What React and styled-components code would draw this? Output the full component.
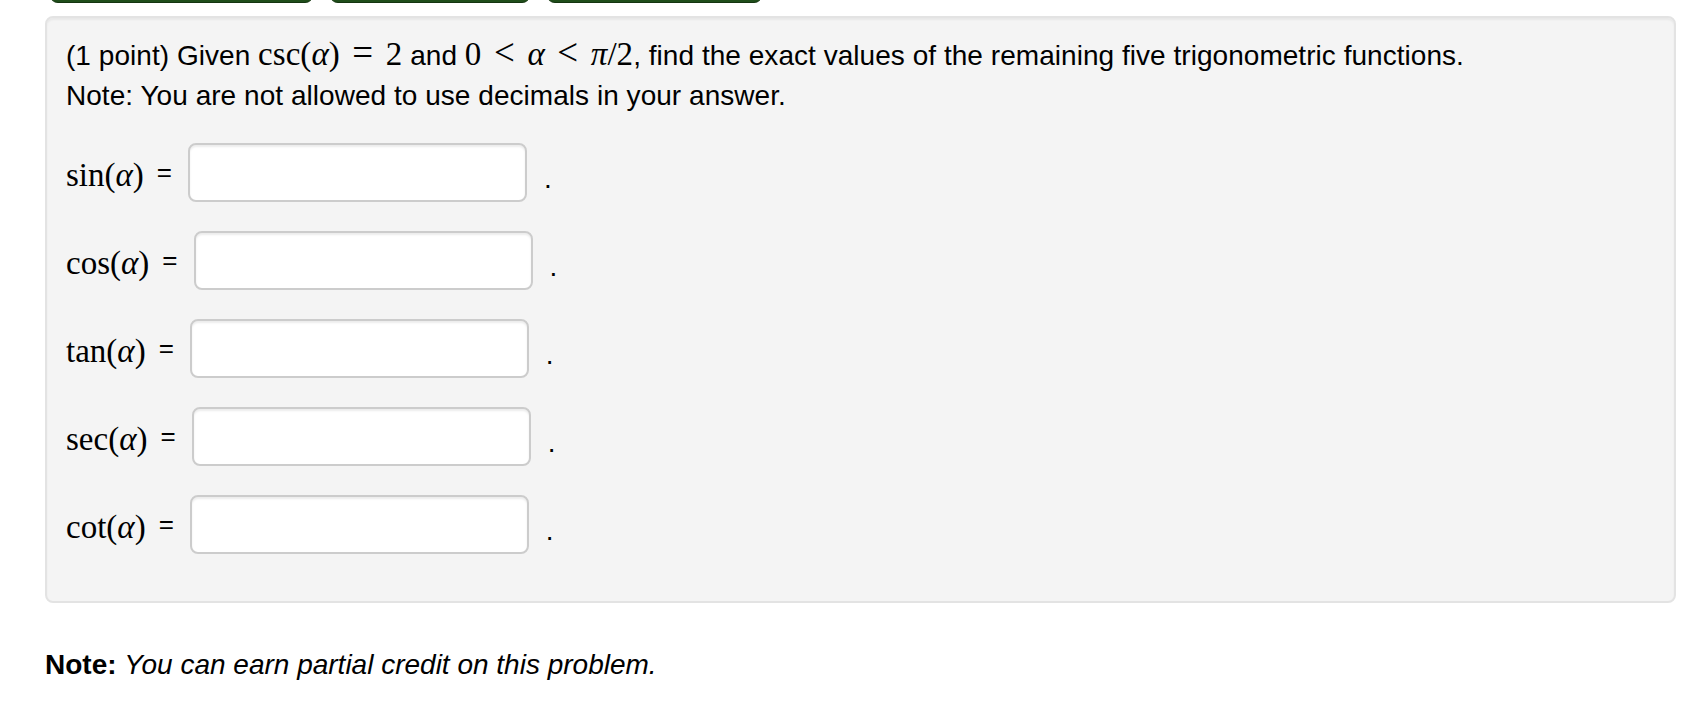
import React from "react";
import styled, { createGlobalStyle } from "styled-components";

const GlobalStyle = createGlobalStyle`
  html, body {
    margin: 0;
    padding: 0;
    background: #ffffff;
  }
  body {
    font-family: "Liberation Sans", Arial, Helvetica, sans-serif;
    color: #000;
  }
`;

const Page = styled.div`
  padding: 0 8px 0 45px;
`;

const ButtonBar = styled.div`
  display: flex;
  gap: 17px;
  margin-top: -39px;
  padding-left: 5px;
`;

const NavButton = styled.div`
  width: ${props => props.width}px;
  height: 41px;
  background: #1f4d1a;
  border-bottom: 1px solid #143510;
  border-radius: 0 0 8px 8px;
`;

const Well = styled.div`
  margin-top: 13px;
  background: #f4f4f4;
  border: 2px solid #e3e3e3;
  border-radius: 8px;
  box-shadow: inset 0 2px 2px rgba(0, 0, 0, 0.05);
  padding: 16px 19px 46px 19px;
  height: 587px;
  box-sizing: border-box;
`;

const Prompt = styled.div`
  font-size: 28px;
  line-height: 40px;
  letter-spacing: 0.04px;
  margin-bottom: -2px;
`;

const Math = styled.span`
  font-family: "Liberation Serif", "Times New Roman", serif;
  font-size: ${props => props.size || 33}px;
  font-style: normal;
`;

const Var = styled.i`
  font-family: "Liberation Serif", "Times New Roman", serif;
  font-style: italic;
`;

const Rel = styled.span`
  margin: 0 0.34em;
  font-size: 1.12em;
  line-height: 1;
`;

const AnswerRow = styled.div`
  display: flex;
  align-items: center;
  height: 59px;
  margin-top: 29px;
  font-size: 28px;
`;

const FuncLabel = styled.span`
  font-family: "Liberation Serif", "Times New Roman", serif;
  font-size: 33px;
  position: relative;
  top: 3px;
`;

const Equals = styled.span`
  margin: 0 16px 0 13px;
  font-size: 26px;
`;

const AnswerInput = styled.input`
  width: 339px;
  height: 59px;
  box-sizing: border-box;
  border: 2px solid #cccccc;
  border-radius: 8px;
  background: #ffffff;
  box-shadow: inset 0 2px 2px rgba(0, 0, 0, 0.075);
  outline: none;
  font-size: 28px;
  padding: 0 12px;
`;

const Period = styled.span`
  margin-left: 17px;
  font-size: 28px;
  position: relative;
  top: 6px;
`;

const Footer = styled.p`
  margin: 42px 0 0 0;
  font-size: 28px;
  line-height: 40px;
`;

const functions = ["sin", "cos", "tan", "sec", "cot"];

export default function App() {
  return (
    <Page>
      <GlobalStyle />
      <ButtonBar>
        <NavButton width={263} />
        <NavButton width={200} />
        <NavButton width={215} />
      </ButtonBar>
      <Well>
        <Prompt>
          (1 point) Given{" "}
          <Math>
            csc(<Var>α</Var>)<Rel>=</Rel>2
          </Math>{" "}
          and{" "}
          <Math>
            0<Rel>&lt;</Rel>
            <Var>α</Var>
            <Rel>&lt;</Rel>
            <Var>π</Var>/2
          </Math>
          , find the exact values of the remaining five trigonometric functions.
          <br />
          Note: You are not allowed to use decimals in your answer.
        </Prompt>
        {functions.map(fn => (
          <AnswerRow key={fn}>
            <FuncLabel>
              {fn}(<Var>α</Var>)
            </FuncLabel>
            <Equals>=</Equals>
            <AnswerInput type="text" />
            <Period>.</Period>
          </AnswerRow>
        ))}
      </Well>
      <Footer>
        <b>Note:</b> <i>You can earn partial credit on this problem.</i>
      </Footer>
    </Page>
  );
}
